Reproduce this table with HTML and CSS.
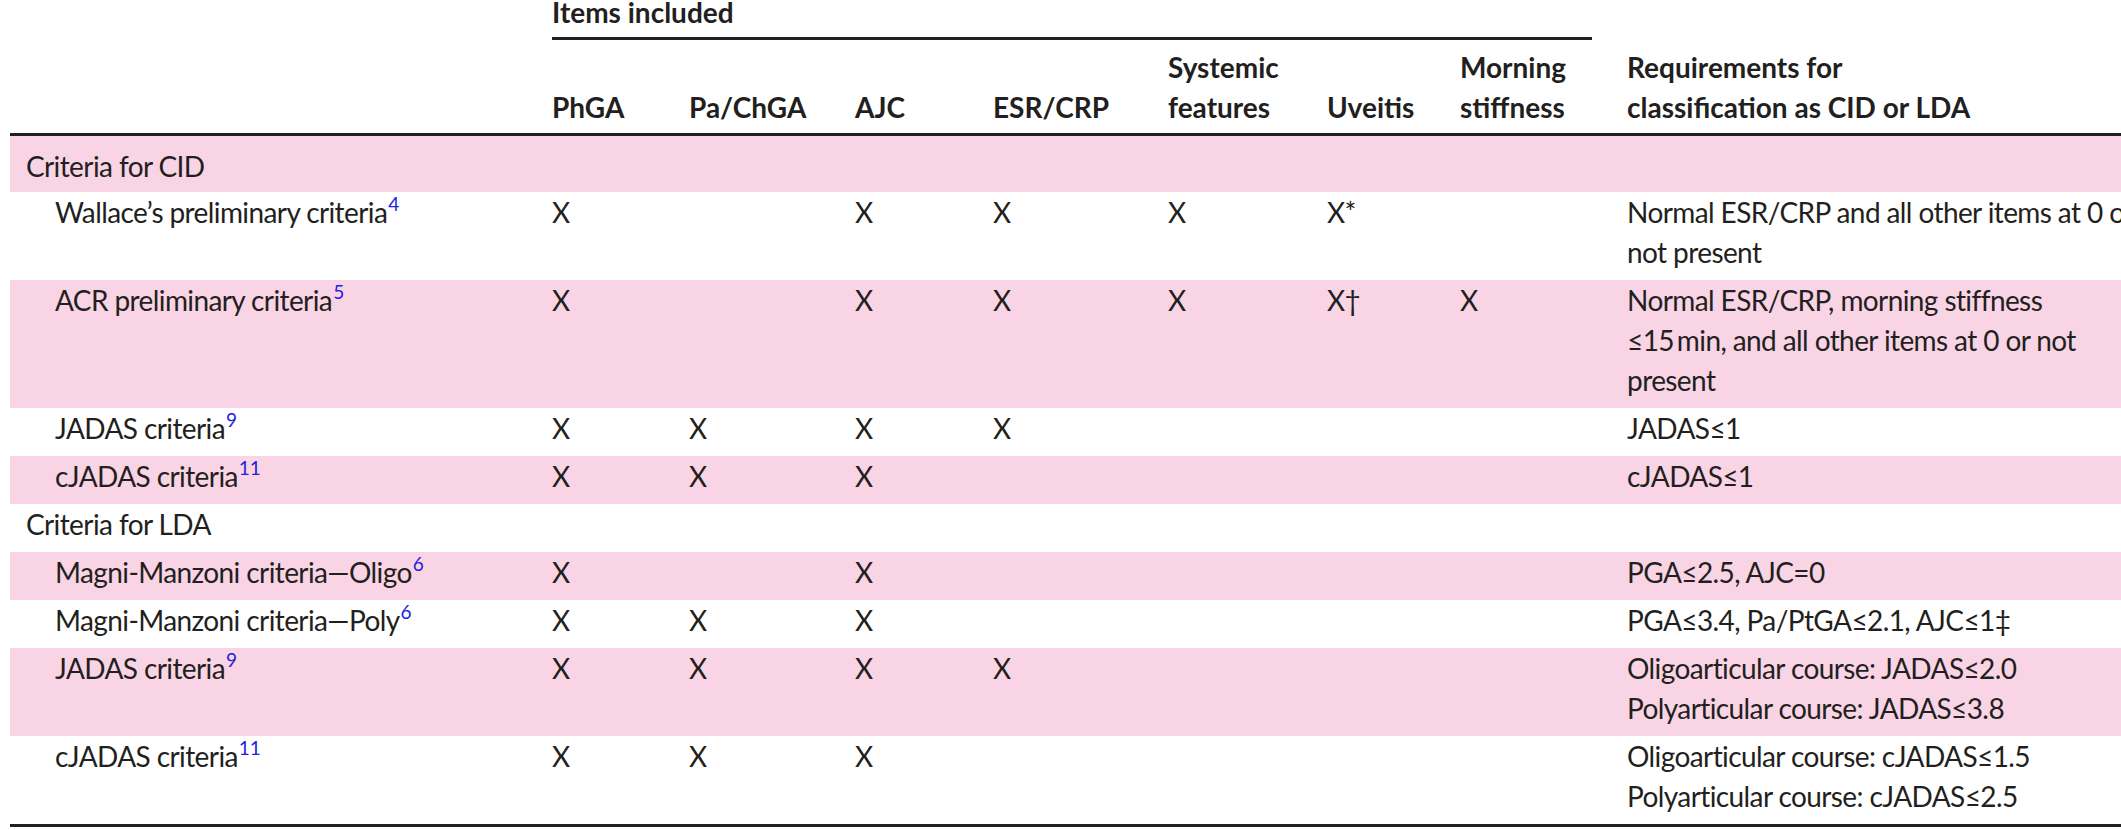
FILE: index.html
```html
<!DOCTYPE html>
<html lang="en">
<head>
<meta charset="utf-8">
<title>Criteria for CID and LDA</title>
<link rel="stylesheet" href="styles.css">
</head>
<body>
<table class="criteria">
  <colgroup>
    <col class="c-name">
    <col class="c-phga">
    <col class="c-pachga">
    <col class="c-ajc">
    <col class="c-esr">
    <col class="c-sys">
    <col class="c-uv">
    <col class="c-morn">
    <col class="c-req">
  </colgroup>
  <thead>
    <tr class="group-row">
      <th></th>
      <th colspan="7" class="group">Items included</th>
      <th></th>
    </tr>
    <tr class="head-row">
      <th></th>
      <th>PhGA</th>
      <th>Pa/ChGA</th>
      <th>AJC</th>
      <th>ESR/CRP</th>
      <th>Systemic<br>features</th>
      <th>Uveitis</th>
      <th>Morning<br>stiffness</th>
      <th class="req">Requirements for<br>classification as CID or LDA</th>
    </tr>
  </thead>
  <tbody>
    <tr class="section first">
      <td colspan="9" class="sec-label">Criteria for CID</td>
    </tr>
    <tr>
      <td class="item">Wallace’s preliminary criteria<sup class="ref">4</sup></td>
      <td>X</td><td></td><td>X</td><td>X</td><td>X</td><td>X*</td><td></td>
      <td class="req">Normal ESR/CRP and all other items at 0 or<br>not present</td>
    </tr>
    <tr>
      <td class="item">ACR preliminary criteria<sup class="ref">5</sup></td>
      <td>X</td><td></td><td>X</td><td>X</td><td>X</td><td>X†</td><td>X</td>
      <td class="req">Normal ESR/CRP, morning stiffness<br>≤15&#8201;min, and all other items at 0 or not<br>present</td>
    </tr>
    <tr>
      <td class="item">JADAS criteria<sup class="ref">9</sup></td>
      <td>X</td><td>X</td><td>X</td><td>X</td><td></td><td></td><td></td>
      <td class="req">JADAS≤1</td>
    </tr>
    <tr>
      <td class="item">cJADAS criteria<sup class="ref">11</sup></td>
      <td>X</td><td>X</td><td>X</td><td></td><td></td><td></td><td></td>
      <td class="req">cJADAS≤1</td>
    </tr>
    <tr class="section">
      <td colspan="9" class="sec-label">Criteria for LDA</td>
    </tr>
    <tr>
      <td class="item">Magni-Manzoni criteria—Oligo<sup class="ref">6</sup></td>
      <td>X</td><td></td><td>X</td><td></td><td></td><td></td><td></td>
      <td class="req">PGA≤2.5, AJC=0</td>
    </tr>
    <tr>
      <td class="item">Magni-Manzoni criteria—Poly<sup class="ref">6</sup></td>
      <td>X</td><td>X</td><td>X</td><td></td><td></td><td></td><td></td>
      <td class="req">PGA≤3.4, Pa/PtGA≤2.1, AJC≤1‡</td>
    </tr>
    <tr>
      <td class="item">JADAS criteria<sup class="ref">9</sup></td>
      <td>X</td><td>X</td><td>X</td><td>X</td><td></td><td></td><td></td>
      <td class="req">Oligoarticular course: JADAS≤2.0<br>Polyarticular course: JADAS≤3.8</td>
    </tr>
    <tr class="last">
      <td class="item">cJADAS criteria<sup class="ref">11</sup></td>
      <td>X</td><td>X</td><td>X</td><td></td><td></td><td></td><td></td>
      <td class="req">Oligoarticular course: cJADAS≤1.5<br>Polyarticular course: cJADAS≤2.5</td>
    </tr>
  </tbody>
</table>
</body>
</html>
```
FILE: styles.css
```css
html, body {
  margin: 0;
  padding: 0;
  background: #ffffff;
  overflow: hidden;
}

body {
  font-family: "Lato", "Liberation Sans", sans-serif;
  font-size: 28px;
  line-height: 40px;
  color: #231f20;
}

.criteria {
  border-collapse: separate;
  border-spacing: 0;
  table-layout: fixed;
  width: 2190px;
  margin: 0 0 0 10px;
}

.c-name { width: 542px; }
.c-phga { width: 137px; }
.c-pachga { width: 166px; }
.c-ajc { width: 138px; }
.c-esr { width: 175px; }
.c-sys { width: 159px; }
.c-uv { width: 133px; }
.c-morn { width: 132px; }
.c-req { width: 608px; }

.criteria th,
.criteria td {
  padding: 0 0 8px 0;
  text-align: left;
  vertical-align: top;
  white-space: nowrap;
}

.criteria td {
  letter-spacing: -0.6px;
}

.criteria thead th {
  font-weight: 700;
  vertical-align: bottom;
}

.group-row th {
  line-height: 24px;
  padding-bottom: 13px;
}

.group-row th.group {
  border-bottom: 3px solid #231f20;
}

.head-row th {
  padding-top: 7px;
  padding-bottom: 6px;
  border-bottom: 3px solid #231f20;
}

.criteria .req {
  padding-left: 35px;
}

.criteria tbody tr:nth-child(odd) td {
  background: #f9d4e5;
}

.criteria .sec-label {
  padding-left: 16px;
}

.criteria .first td {
  padding-top: 10px;
  padding-bottom: 6px;
}

.criteria .item {
  padding-left: 45px;
}

.criteria .last td {
  border-bottom: 3px solid #231f20;
}

.ref {
  font-size: 19px;
  line-height: 0;
  vertical-align: 12px;
  color: #2222dd;
  margin-left: 1px;
  letter-spacing: 0;
}
```
